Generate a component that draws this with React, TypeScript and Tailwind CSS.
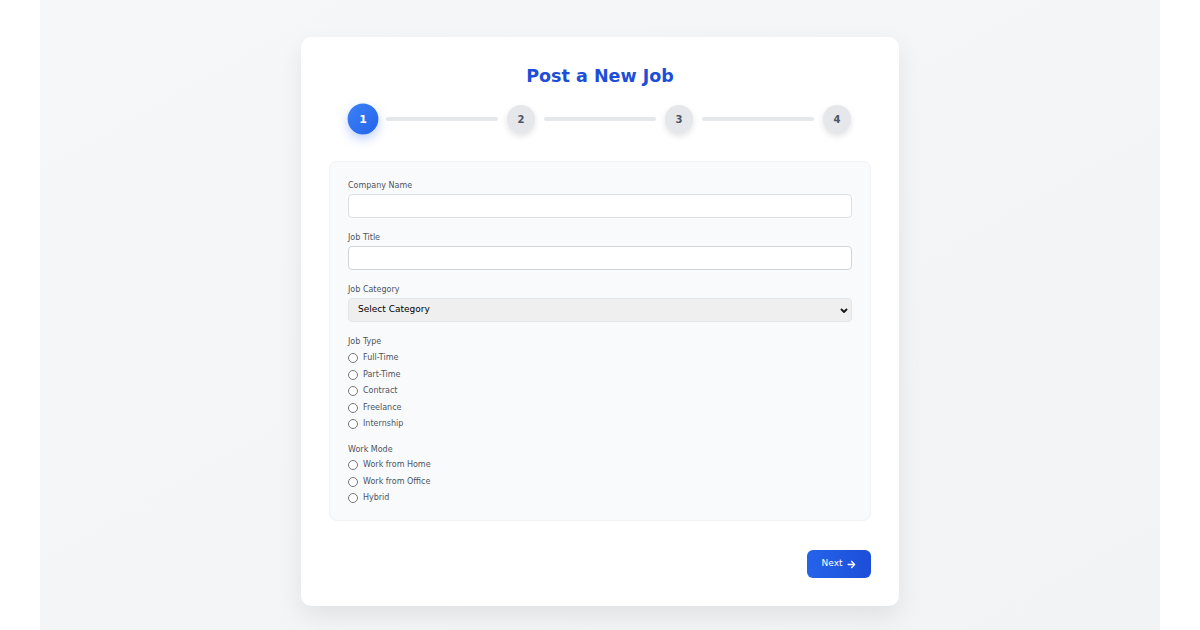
import React from "react";
import { FaArrowRight } from "react-icons/fa";

const jobTypes = ["Full-Time", "Part-Time", "Contract", "Freelance", "Internship"];
const workModes = ["Work from Home", "Work from Office", "Hybrid"];

function Step({ n, active }: { n: number; active?: boolean }) {
  return active ? (
    <div className="w-7 h-7 shrink-0 rounded-full bg-gradient-to-br from-[#3b82f6] to-[#2563eb] text-white flex items-center justify-center text-[10px] font-bold scale-110 shadow-[0_4px_10px_rgba(37,99,235,0.3)]">
      {n}
    </div>
  ) : (
    <div className="w-7 h-7 shrink-0 rounded-full bg-[#e5e7eb] text-[#4b5563] flex items-center justify-center text-[10px] font-bold shadow-[0_3px_6px_rgba(0,0,0,0.12)]">
      {n}
    </div>
  );
}

function Line() {
  return <div className="flex-1 h-[4px] mx-[9px] rounded-full bg-[#e5e7eb]" />;
}

function Radio({ name, label }: { name: string; label: string }) {
  return (
    <label className="flex items-center h-3 gap-[5px]">
      <input type="radio" name={name} className="w-[10px] h-[10px] m-0" />
      <span className="text-[8px] leading-3 text-[#4b5563]">{label}</span>
    </label>
  );
}

export default function App() {
  return (
    <div className="w-full bg-white" style={{ fontFamily: '"DejaVu Sans", Verdana, sans-serif' }}>
      <div className="max-w-[1120px] mx-auto min-h-[630px] bg-gradient-to-br from-[#f6f7f9] to-[#f2f3f5] pt-[37px] pb-6">
        <div className="w-[598px] mx-auto bg-white rounded-[10px] shadow-[0_10px_25px_rgba(0,0,0,0.08)] p-7">
          <h1 className="text-center text-[17.5px] leading-5 font-bold text-[#1d4ed8] translate-y-px">Post a New Job</h1>

          <div className="mt-5 mb-7 px-5 flex items-center">
            <Step n={1} active />
            <Line />
            <Step n={2} />
            <Line />
            <Step n={3} />
            <Line />
            <Step n={4} />
          </div>

          <div className="bg-[#f9fafb] border border-[#f1f2f4] rounded-lg px-[18px] pt-[17px] pb-[16px] flex flex-col gap-[13px]">
            <div className="flex flex-col">
              <label className="text-[8px] leading-[14px] text-[#4b5563] mb-px">Company Name</label>
              <input className="block h-6 w-full bg-white border border-[#dcdfe4] rounded-[4px] px-2 text-[9px]" />
            </div>
            <div className="flex flex-col">
              <label className="text-[8px] leading-[14px] text-[#4b5563] mb-px">Job Title</label>
              <input className="block h-6 w-full bg-white border border-[#d1d5db] rounded-[4px] px-2 text-[9px]" />
            </div>
            <div className="flex flex-col">
              <label className="text-[8px] leading-[14px] text-[#4b5563] mb-px">Job Category</label>
              <div className="relative h-6">
                <select className="block appearance-none h-6 w-full bg-[#efefef] border border-[#e3e5e8] rounded-[4px] pl-[9px] pr-4 text-[9px] text-black">
                  <option>Select Category</option>
                </select>
                <svg
                  className="absolute right-[4px] top-[10px] pointer-events-none"
                  width="8"
                  height="5"
                  viewBox="0 0 8 5"
                >
                  <polyline points="1,1 4,4 7,1" fill="none" stroke="#111" strokeWidth="1.8" />
                </svg>
              </div>
            </div>
            <div className="flex flex-col">
              <span className="text-[8px] leading-[14px] text-[#4b5563] mb-[3px]">Job Type</span>
              <div className="flex flex-col gap-[4.5px]">
                {jobTypes.map((t) => (
                  <Radio key={t} name="jobType" label={t} />
                ))}
              </div>
            </div>
            <div className="flex flex-col">
              <span className="text-[8px] leading-[14px] text-[#4b5563] mb-[2px]">Work Mode</span>
              <div className="flex flex-col gap-[4.5px]">
                {workModes.map((t) => (
                  <Radio key={t} name="workMode" label={t} />
                ))}
              </div>
            </div>
          </div>

          <div className="mt-[29px] flex justify-end">
            <button className="h-7 w-16 rounded-[6px] bg-gradient-to-r from-[#2563eb] to-[#1d4ed8] text-white text-[9px] font-normal flex items-center justify-center gap-[5px]">
              Next <FaArrowRight className="w-[9px] h-[9px]" />
            </button>
          </div>
        </div>
      </div>
    </div>
  );
}
